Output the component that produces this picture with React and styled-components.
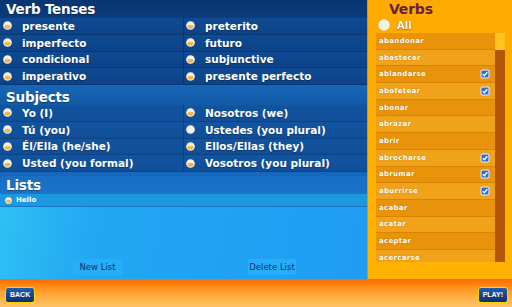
import React from "react";
import styled, { createGlobalStyle } from "styled-components";

const Global = createGlobalStyle`
  html, body { margin: 0; padding: 0; }
  body { width: 512px; height: 307px; overflow: hidden; background: #ffb000; }
  * { box-sizing: border-box; }
`;

const Page = styled.div`
  width: 512px;
  height: 307px;
  display: flex;
  flex-direction: column;
  font-family: "DejaVu Sans", Verdana, sans-serif;
`;

const Main = styled.div`
  display: flex;
  height: 279px;
`;

const LeftPanel = styled.div`
  width: 368px;
  display: flex;
  flex-direction: column;
  background: #0f4c93;
  border-right: 1px solid #f08a00;
`;

const SectionHeader = styled.div`
  height: ${(p) => p.$h}px;
  display: flex;
  align-items: center;
  padding-left: 6px;
  padding-top: ${(p) => p.$pt || 0}px;
  color: #fff;
  font-size: 13.5px;
  font-weight: bold;
  letter-spacing: -0.2px;
  background: ${(p) => p.$bg};
  text-shadow: 0 1px 1px rgba(0, 0, 0, 0.35);
`;

const OptionGrid = styled.div`
  display: grid;
  grid-template-columns: 183px 184px;
  grid-auto-rows: 16.75px;
`;

const OptionRow = styled.div`
  display: flex;
  align-items: center;
  gap: ${(p) => (p.$right ? 10 : 10)}px;
  color: #fff;
  font-size: 10.5px;
  font-weight: bold;
  background: linear-gradient(180deg, ${(p) => p.$c1} 0%, ${(p) => p.$c2} 100%);
  border-bottom: 1px solid ${(p) => p.$line};
  border-left: ${(p) => (p.$right ? "1px solid " + p.$line : "none")};
  padding-left: ${(p) => (p.$right ? 2 : 3)}px;
  text-shadow: 0 1px 1px rgba(0, 0, 0, 0.3);
`;

const Gap = styled.div`
  height: 4px;
  background: #1668bd;
`;

const HelloRow = styled.div`
  height: 13px;
  display: flex;
  align-items: center;
  gap: 4px;
  padding-left: 5px;
  color: #fff;
  font-size: 7px;
  font-weight: bold;
  background: #1c98e0;
  border-bottom: 1px solid #1578c4;
`;

const ListArea = styled.div`
  flex: 1;
  display: flex;
  align-items: flex-end;
  padding-bottom: 4px;
  background: linear-gradient(100deg, #2fc0f4 0%, #22a8f2 25%, #1e9cf2 100%);
`;

const ListButton = styled.div`
  height: 16px;
  width: ${(p) => p.$w}px;
  margin-left: ${(p) => p.$ml}px;
  display: flex;
  align-items: center;
  justify-content: center;
  font-family: "DejaVu Sans", sans-serif;
  font-size: 8.5px;
  color: #10306e;
  background: #26aef8;
`;

const RightPanel = styled.div`
  flex: 1;
  display: flex;
  flex-direction: column;
  background: linear-gradient(180deg, #ffaa00 0%, #ffb300 100%);
  padding-left: 8px;
  padding-right: 7px;
`;

const VerbsTitle = styled.div`
  height: 17px;
  display: flex;
  align-items: center;
  padding-left: 13px;
  color: #6a1e45;
  font-size: 14px;
  font-weight: bold;
  letter-spacing: -0.2px;
`;

const AllRow = styled.div`
  height: 16px;
  display: flex;
  align-items: center;
  gap: 7px;
  padding-left: 2px;
  color: #fff;
  font-size: 10px;
  font-weight: bold;
  text-shadow: 0 0 1px #8a5a00, 0 1px 1px rgba(0,0,0,0.3);
`;

const ListBox = styled.div`
  display: flex;
  height: 229px;
  overflow: hidden;
`;

const VerbList = styled.div`
  flex: 1;
  display: flex;
  flex-direction: column;
`;

const VerbRow = styled.div`
  flex: 0 0 16.7px;
  display: flex;
  align-items: center;
  justify-content: space-between;
  padding: 0 5px 0 3px;
  color: #fff;
  font-size: 7px;
  font-weight: bold;
  letter-spacing: 0.3px;
  background: ${(p) => (p.$alt ? "#f0a21a" : "#e8930a")};
  border-bottom: 1px solid #d88400;
  text-shadow: 0 0 1px rgba(120, 60, 0, 0.5);
`;

const Track = styled.div`
  width: 10px;
  background: #b3560a;
  display: flex;
  flex-direction: column;
`;

const Thumb = styled.div`
  height: 17px;
  background: #ffc320;
`;

const BottomBar = styled.div`
  height: 28px;
  display: flex;
  align-items: center;
  justify-content: space-between;
  padding: 0 4px 0 5px;
  background: linear-gradient(180deg, #ff6a00 0%, #ff8a14 25%, #ffb043 65%, #ffc468 100%);
`;

const NavButton = styled.div`
  height: 16px;
  padding: 0 4px;
  min-width: ${(p) => p.$w}px;
  display: flex;
  align-items: center;
  justify-content: center;
  border-radius: 3px;
  border: 1.5px solid #ffd400;
  background: linear-gradient(180deg, #1f5fb0 0%, #0b2f6c 100%);
  color: #fff;
  font-family: "Liberation Sans", Arial, sans-serif;
  font-size: 7px;
  font-weight: bold;
  margin-top: 3px;
`;

const Radio = ({ filled = true, size = 9 }) => (
  <svg width={size} height={size} viewBox="0 0 10 10" style={{ flex: "none" }}>
    <circle cx="5" cy="5" r="4.8" fill="#f4f0e4" />
    {filled && <ellipse cx="5" cy="6.2" rx="3.2" ry="2.1" fill="#f5a623" />}
    {filled && <ellipse cx="5" cy="5.6" rx="2.6" ry="1" fill="#fbc25a" />}
  </svg>
);

const Check = () => (
  <svg width="10" height="10" viewBox="0 0 10 10">
    <rect x="0.5" y="0.5" width="9" height="9" rx="2" fill="#e8eef8" />
    <rect x="1.5" y="1.5" width="7" height="7" rx="1.3" fill="#2f6ee0" />
    <path d="M2.8 5.2 L4.3 6.7 L7.3 3.3" stroke="#fff" strokeWidth="1.4" fill="none" />
  </svg>
);

const tenses = [
  ["presente", "preterito"],
  ["imperfecto", "futuro"],
  ["condicional", "subjunctive"],
  ["imperativo", "presente perfecto"],
];

const subjects = [
  ["Yo (I)", "Nosotros (we)", true],
  ["Tú (you)", "Ustedes (you plural)", false],
  ["Él/Ella (he/she)", "Ellos/Ellas (they)", true],
  ["Usted (you formal)", "Vosotros (you plural)", true],
];

const verbs = [
  ["abandonar", false],
  ["abastecer", false],
  ["ablandarse", true],
  ["abofetear", true],
  ["abonar", false],
  ["abrazar", false],
  ["abrir", false],
  ["abrocharse", true],
  ["abrumar", true],
  ["aburrirse", true],
  ["acabar", false],
  ["acatar", false],
  ["aceptar", false],
  ["acercarse", false],
];

export default function App() {
  return (
    <Page>
      <Global />
      <Main>
        <LeftPanel>
          <SectionHeader $h={18} $bg="linear-gradient(180deg,#0a3470,#0c3c7c)">Verb Tenses</SectionHeader>
          <OptionGrid>
            {tenses.map(([a, b], i) => (
              <React.Fragment key={i}>
                <OptionRow $c1="#0f4a92" $c2="#0d4388" $line="#0a366f">
                  <Radio />
                  <span>{a}</span>
                </OptionRow>
                <OptionRow $right $c1="#0f4a92" $c2="#0d4388" $line="#0a366f">
                  <Radio />
                  <span>{b}</span>
                </OptionRow>
              </React.Fragment>
            ))}
          </OptionGrid>
          <SectionHeader $h={20} $pt={3} $bg="linear-gradient(180deg,#1766b8,#125aa6)">Subjects</SectionHeader>
          <OptionGrid>
            {subjects.map(([a, b, f], i) => (
              <React.Fragment key={i}>
                <OptionRow $c1="#1254a0" $c2="#104e98" $line="#0d427f">
                  <Radio />
                  <span>{a}</span>
                </OptionRow>
                <OptionRow $right $c1="#1254a0" $c2="#104e98" $line="#0d427f">
                  <Radio filled={f} />
                  <span>{b}</span>
                </OptionRow>
              </React.Fragment>
            ))}
          </OptionGrid>
          <Gap />
          <SectionHeader $h={18} $bg="linear-gradient(180deg,#1a6ec4,#1a74ca)">Lists</SectionHeader>
          <HelloRow>
            <Radio size={7} />
            <span>Hello</span>
          </HelloRow>
          <ListArea>
            <ListButton $w={49} $ml={73}>New List</ListButton>
            <ListButton $w={48} $ml={126}>Delete List</ListButton>
          </ListArea>
        </LeftPanel>
        <RightPanel>
          <VerbsTitle>Verbs</VerbsTitle>
          <AllRow>
            <Radio filled={false} size={12} />
            <span>All</span>
          </AllRow>
          <ListBox>
            <VerbList>
              {verbs.map(([v, c], i) => (
                <VerbRow key={v} $alt={i % 2 === 1}>
                  <span>{v}</span>
                  {c && <Check />}
                </VerbRow>
              ))}
            </VerbList>
            <Track>
              <Thumb />
            </Track>
          </ListBox>
        </RightPanel>
      </Main>
      <BottomBar>
        <NavButton $w={26}>BACK</NavButton>
        <NavButton $w={27}>PLAY!</NavButton>
      </BottomBar>
    </Page>
  );
}
